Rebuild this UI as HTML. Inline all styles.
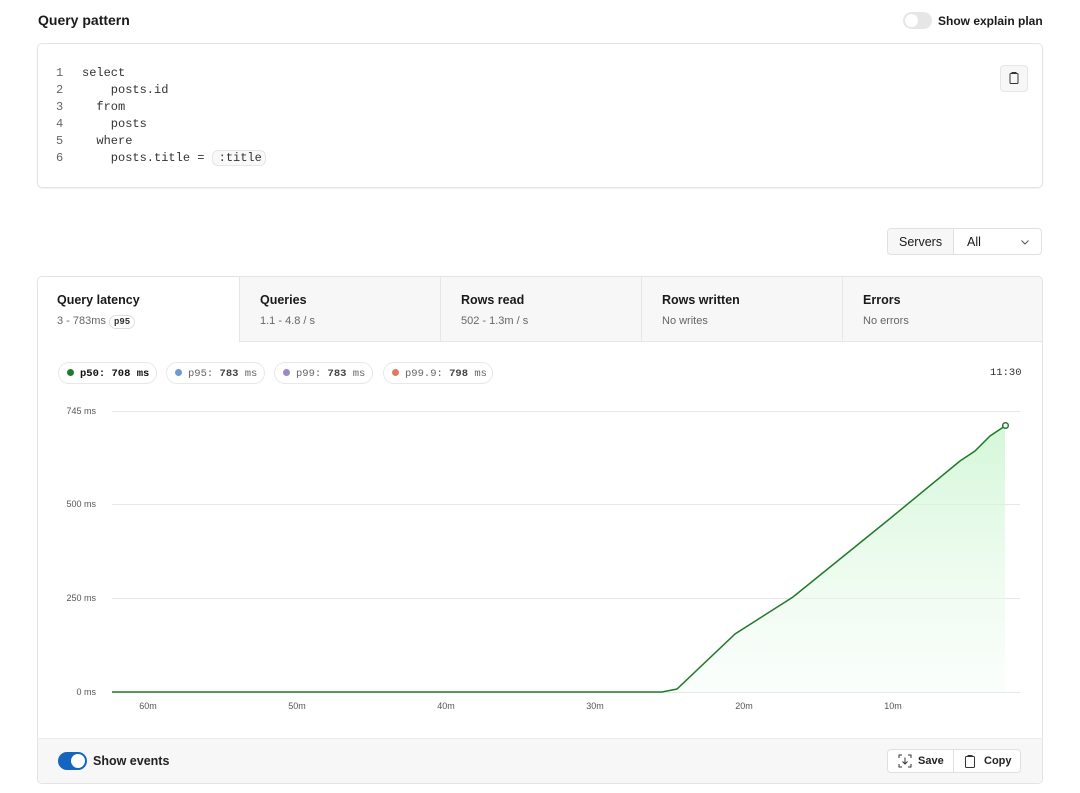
<!DOCTYPE html>
<html><head><meta charset="utf-8"><style>
*{box-sizing:border-box;margin:0;padding:0}
body{width:1080px;height:793px;background:#fff;font-family:"Liberation Sans",sans-serif;color:#1a1a1a;position:relative;overflow:hidden}
.abs{position:absolute}
.mono{font-family:"Liberation Mono","DejaVu Sans Mono",monospace}
.tab{position:absolute;top:0;height:65px;width:201px;background:#f7f7f7;border-left:1px solid #e6e6e6;border-bottom:1px solid #e6e6e6;padding:16px 20px}
.tab b{display:block;font-size:12.5px;font-weight:bold;color:#1a1a1a}
.tab span{display:block;font-size:11px;color:#666;margin-top:8px}
.pill{position:absolute;top:362px;height:22px;border:1px solid #e8e8e8;border-radius:11px;font-size:10.5px;color:#666;padding:5px 0 0 8px;white-space:nowrap}
.dot{display:inline-block;width:7px;height:7px;border-radius:50%;margin-right:6px;vertical-align:0}
.yl{position:absolute;right:984px;font-size:9px;color:#555}
.xl{position:absolute;top:701px;font-size:9px;color:#555;transform:translateX(-50%)}
</style></head><body>
<div class="abs" style="left:38px;top:12px;font-size:14px;font-weight:bold">Query pattern</div>
<div class="abs" style="left:903px;top:12px;width:29px;height:17px;border-radius:9px;background:#e6e6e6"><div style="position:absolute;left:2px;top:2px;width:13px;height:13px;border-radius:50%;background:#fff"></div></div>
<div class="abs" style="left:938px;top:14px;font-size:12px;font-weight:bold">Show explain plan</div>

<div class="abs" style="left:37px;top:43px;width:1006px;height:145px;border:1px solid #e3e3e3;border-radius:5px;box-shadow:0 1px 1px rgba(0,0,0,.05)"></div>
<div class="abs mono" style="left:56px;top:65px;font-size:12px;line-height:17px;color:#666">1<br>2<br>3<br>4<br>5<br>6</div>
<div class="abs mono" style="left:82px;top:65px;font-size:12px;line-height:17px;color:#333;white-space:pre">select
    posts.id
  from
    posts
  where
    posts.title = <span style="border:1px solid #e6e6e6;background:#f8f8f8;border-radius:6px;padding:0 3px 0 6px">:title</span></div>
<div class="abs" style="left:1000px;top:65px;width:28px;height:27px;border:1px solid #e6e6e6;background:#f7f7f7;border-radius:4px">
<svg width="26" height="25" viewBox="0 0 26 25"><rect x="9" y="7.5" width="8" height="10" rx="1" fill="none" stroke="#333" stroke-width="1"/><path d="M11 7.5v-1h4v1" fill="none" stroke="#333"/></svg></div>

<div class="abs" style="left:887px;top:228px;width:155px;height:27px;border:1px solid #e0e0e0;border-radius:4px;overflow:hidden">
<div style="position:absolute;left:0;top:0;width:66px;height:25px;background:#f7f7f7;border-right:1px solid #e0e0e0;font-size:12.5px;padding:6px 0 0 11px">Servers</div>
<div style="position:absolute;left:79px;top:6px;font-size:12.5px">All</div>
<svg class="abs" style="left:132px;top:9px" width="10" height="8"><path d="M1.5 2.5l3.5 3.5 3.5-3.5" fill="none" stroke="#555" stroke-width="1"/></svg></div>

<div class="abs" style="left:37px;top:276px;width:1006px;height:508px;border:1px solid #e3e3e3;border-radius:5px;overflow:hidden">
<div class="tab" style="left:-1px;background:#fff;border-bottom-color:#fff;border-left:none;width:202px"><b>Query latency</b><span>3 - 783ms <span style="display:inline-block;margin:0;border:1px solid #ddd;border-radius:8px;font-size:9px;font-weight:bold;padding:1px 4px;color:#333" class="mono">p95</span></span></div>
<div class="tab" style="left:201px"><b>Queries</b><span>1.1 - 4.8 / s</span></div>
<div class="tab" style="left:402px"><b>Rows read</b><span>502 - 1.3m / s</span></div>
<div class="tab" style="left:603px"><b>Rows written</b><span>No writes</span></div>
<div class="tab" style="left:804px;width:202px"><b>Errors</b><span>No errors</span></div>
<div style="position:absolute;left:0;top:461px;width:1006px;height:47px;background:#f7f7f7;border-top:1px solid #ececec"></div>
</div>

<div class="pill mono" style="left:58px;width:99px;color:#111;font-weight:bold"><span class="dot" style="background:#1a7f2a"></span>p50: 708 ms</div>
<div class="pill mono" style="left:166px;width:99px"><span class="dot" style="background:#6b9ad6"></span>p95: <b style="color:#444">783</b> ms</div>
<div class="pill mono" style="left:274px;width:99px"><span class="dot" style="background:#9b86d0"></span>p99: <b style="color:#444">783</b> ms</div>
<div class="pill mono" style="left:383px;width:110px"><span class="dot" style="background:#e07a5f"></span>p99.9: <b style="color:#444">798</b> ms</div>
<div class="abs mono" style="left:990px;top:367px;font-size:10.5px;color:#333">11:30</div>

<div class="yl" style="top:406px">745 ms</div>
<div class="yl" style="top:499px">500 ms</div>
<div class="yl" style="top:593px">250 ms</div>
<div class="yl" style="top:687px">0 ms</div>
<div class="xl" style="left:148px">60m</div><div class="xl" style="left:297px">50m</div><div class="xl" style="left:446px">40m</div><div class="xl" style="left:595px">30m</div><div class="xl" style="left:744px">20m</div><div class="xl" style="left:893px">10m</div>
<svg class="abs" style="left:0;top:0" width="1080" height="793">
<defs><linearGradient id="g" x1="0" y1="0" x2="0" y2="1"><stop offset="0" stop-color="#c9f5cf" stop-opacity=".8"/><stop offset="1" stop-color="#eefbef" stop-opacity=".3"/></linearGradient></defs>
<g stroke="#e8e8e8" stroke-width="1"><line x1="112" y1="411.5" x2="1020" y2="411.5"/><line x1="112" y1="504.5" x2="1020" y2="504.5"/><line x1="112" y1="598.5" x2="1020" y2="598.5"/><line x1="112" y1="692.5" x2="1020" y2="692.5"/></g>
<path d="M662 692L677 689L735 634L793 597L887 521L960 461L975 451L990 436L1005 426L1005 692Z" fill="url(#g)"/>
<path d="M112 692L662 692L677 689L735 634L793 597L887 521L960 461L975 451L990 436L1005 426" fill="none" stroke="#1f7a2a" stroke-width="1.5"/>
<circle cx="1005.5" cy="425.5" r="2.8" fill="#fff" stroke="#1f7a2a" stroke-width="1.5"/>
</svg>

<div class="abs" style="left:58px;top:752px;width:29px;height:18px;border-radius:9px;background:#1565c0"><div style="position:absolute;right:2px;top:2px;width:14px;height:14px;border-radius:50%;background:#fff"></div></div>
<div class="abs" style="left:93px;top:754px;font-size:12.5px;font-weight:bold;color:#222">Show events</div>
<div class="abs" style="left:887px;top:749px;width:134px;height:24px;border:1px solid #e0e0e0;border-radius:4px;background:#fff;font-size:11px;font-weight:bold;color:#222">
<div style="position:absolute;left:65px;top:0;width:1px;height:22px;background:#e0e0e0"></div>
<svg class="abs" style="left:10px;top:4px" width="14" height="14"><path d="M1 4V1h3M10 1h3v3M13 10v3h-3M4 13H1v-3M7 3.5v6M4.5 7.5L7 10l2.5-2.5" fill="none" stroke="#333" stroke-width="1"/></svg>
<span class="abs" style="left:30px;top:5px">Save</span>
<svg class="abs" style="left:75px;top:4px" width="14" height="15"><rect x="2.5" y="2.5" width="9" height="11" rx="1" fill="none" stroke="#333"/><path d="M5 2.5v-1h4v1" fill="none" stroke="#333"/></svg>
<span class="abs" style="left:96px;top:5px">Copy</span>
</div>
</body></html>
